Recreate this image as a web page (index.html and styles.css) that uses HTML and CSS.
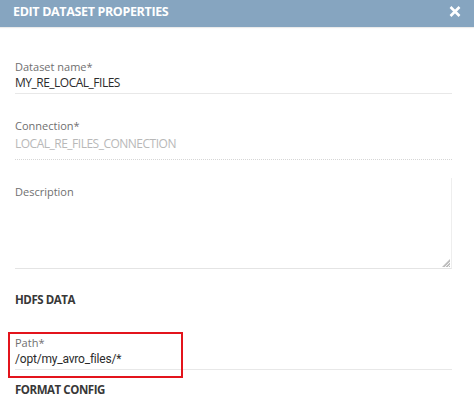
FILE: index.html
```html
<!DOCTYPE html>
<html>
<head>
<meta charset="utf-8">
<link rel="stylesheet" href="styles.css">
</head>
<body>
<div class="dialog">
  <div class="header">
    <span class="title">EDIT DATASET PROPERTIES</span>
    <svg class="close" width="12" height="11" viewBox="0 0 12 11"><path d="M1.5 1 L10.5 10 M10.5 1 L1.5 10" stroke="#fff" stroke-width="2.6" stroke-linecap="butt"/></svg>
  </div>
  <div class="content">
    <div class="field f-name">
      <div class="label">Dataset name*</div>
      <div class="value">MY_RE_LOCAL_FILES</div>
    </div>
    <div class="field f-conn disabled">
      <div class="label">Connection*</div>
      <div class="value">LOCAL_RE_FILES_CONNECTION</div>
    </div>
    <div class="field f-desc">
      <div class="label">Description</div>
      <svg class="grip" width="8" height="8" viewBox="0 0 8 8"><path d="M8 0 L8 8 L0 8 Z" fill="#bdbdbd"/><path d="M8 3 L3 8" stroke="#fff" stroke-width="0.8"/><path d="M8 6 L6 8" stroke="#fff" stroke-width="0.8"/></svg>
    </div>
    <div class="section">HDFS DATA</div>
    <div class="field f-path">
      <div class="label">Path*</div>
      <div class="value path-value">/opt/my_avro_files/*</div>
      <div class="highlight"></div>
    </div>
    <div class="section s-format">FORMAT CONFIG</div>
  </div>
</div>
</body>
</html>
```
FILE: styles.css
```css
html, body {
  margin: 0;
  padding: 0;
  background: #fff;
}
body {
  font-family: "Open Sans", "Lato", sans-serif;
  width: 474px;
  height: 412px;
  overflow: hidden;
}
.header {
  height: 27px;
  background: #86a5c0;
  display: flex;
  align-items: center;
  justify-content: space-between;
  padding: 0 13px 0 13px;
  box-sizing: border-box;
  box-shadow: 0 1px 1px rgba(0,0,0,0.08);
}
.title {
  color: #fff;
  font-weight: 700;
  font-size: 12.5px;
  letter-spacing: -0.35px;
  margin-top: -4px;
}
.close {
  margin-top: -4px;
}
.content {
  padding: 0 22px 0 15px;
}
.field {
  position: relative;
}
.label {
  font-size: 11px;
  line-height: 14px;
  color: #6f6f6f;
}
.value {
  font-size: 12px;
  letter-spacing: -0.5px;
  line-height: 18px;
  color: #2b2b2b;
}
.path-value {
  font-family: "Roboto", "Open Sans", sans-serif;
  font-size: 12px;
  letter-spacing: -0.2px;
}
.f-name {
  margin-top: 33px;
  padding-bottom: 1px;
  border-bottom: 1px solid #e8e8e8;
}
.f-conn {
  margin-top: 25px;
  padding-bottom: 6px;
  border-bottom: 1px dotted #d6d6d6;
}
.f-conn .label {
  margin-bottom: 2px;
}
.disabled .value {
  color: #b8b8b8;
}
.f-desc {
  margin-top: 18px;
  height: 91px;
  box-sizing: border-box;
  padding-top: 7px;
  border-right: 1px solid #eeeeee;
  border-bottom: 1px solid #e4e4e4;
}
.grip {
  position: absolute;
  right: 1px;
  bottom: 1px;
}
.section {
  font-size: 11.5px;
  letter-spacing: -0.45px;
  font-weight: 700;
  color: #383838;
  line-height: 16px;
  margin-top: 23px;
}
.f-path {
  margin-top: 28px;
  padding-bottom: 1px;
  border-bottom: 1px solid #e8e8e8;
}
.highlight {
  position: absolute;
  left: -7px;
  top: -4px;
  width: 171px;
  height: 42px;
  border: 2px solid #e3141c;
}
.s-format {
  margin-top: 12px;
}
```
